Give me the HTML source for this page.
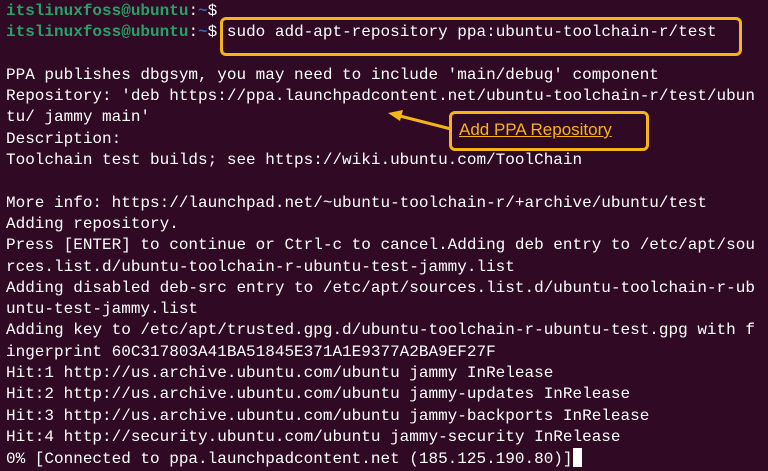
<html><head><style>
body{margin:0;width:768px;height:469px;background:#300a24;overflow:hidden;position:relative}
pre{position:absolute;left:6px;top:1px;margin:0;font-family:"Liberation Mono",monospace;font-size:16px;line-height:21.3px;color:#fff;letter-spacing:0}
.g{color:#26a269;font-weight:bold}.b{color:#3465a4;font-weight:bold}
.box{position:absolute;border:3px solid #f5b417;border-radius:6px}
.cur{display:inline-block;width:9px;height:19px;background:#fff;vertical-align:-4px}
</style></head><body>
<pre><span class="g">itslinuxfoss@ubuntu</span>:<span class="b">~</span>$
<span class="g">itslinuxfoss@ubuntu</span>:<span class="b">~</span>$ sudo add-apt-repository ppa:ubuntu-toolchain-r/test

PPA publishes dbgsym, you may need to include 'main/debug' component
Repository: 'deb https://ppa.launchpadcontent.net/ubuntu-toolchain-r/test/ubun
tu/ jammy main'
Description:
Toolchain test builds; see https://wiki.ubuntu.com/ToolChain

More info: https://launchpad.net/~ubuntu-toolchain-r/+archive/ubuntu/test
Adding repository.
Press [ENTER] to continue or Ctrl-c to cancel.Adding deb entry to /etc/apt/sou
rces.list.d/ubuntu-toolchain-r-ubuntu-test-jammy.list
Adding disabled deb-src entry to /etc/apt/sources.list.d/ubuntu-toolchain-r-ub
untu-test-jammy.list
Adding key to /etc/apt/trusted.gpg.d/ubuntu-toolchain-r-ubuntu-test.gpg with f
ingerprint 60C317803A41BA51845E371A1E9377A2BA9EF27F
Hit:1 http://us.archive.ubuntu.com/ubuntu jammy InRelease
Hit:2 http://us.archive.ubuntu.com/ubuntu jammy-updates InRelease
Hit:3 http://us.archive.ubuntu.com/ubuntu jammy-backports InRelease
Hit:4 http://security.ubuntu.com/ubuntu jammy-security InRelease
0% [Connected to ppa.launchpadcontent.net (185.125.190.80)]<span class="cur"></span></pre>
<div class="box" style="left:220px;top:17px;width:516px;height:33px"></div>
<div class="box" style="left:449px;top:111px;width:194px;height:34px;"></div>
<div style="position:absolute;left:459px;top:120px;font-family:'Liberation Sans',sans-serif;font-size:17px;color:#f5b417;text-decoration:underline">Add PPA Repository</div>
<svg style="position:absolute;left:0;top:0" width="768" height="469"><line x1="451" y1="129" x2="400" y2="116" stroke="#f5b417" stroke-width="3"/><polygon points="388,113 403,110 400,121" fill="#f5b417"/></svg>
</body></html>
